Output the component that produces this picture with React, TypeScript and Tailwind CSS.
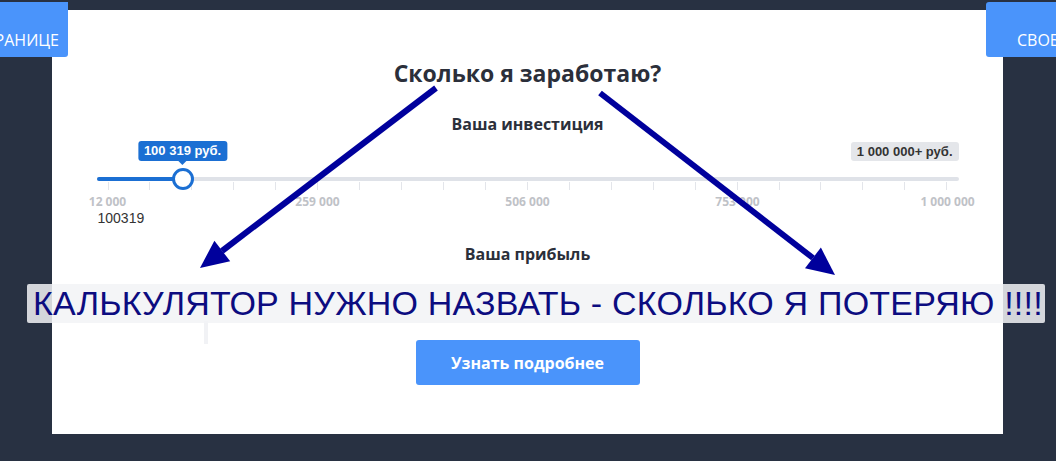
import React from 'react';

const ticks = Array.from({ length: 21 }, (_, i) => i);
const majorLabels = ['12 000', '259 000', '506 000', '753 000', '1 000 000'];

function Slider() {
  const thumbX = 86;
  return (
    <div className="w-[862px] mt-[6px] flex flex-col">
      {/* bubbles */}
      <div className="relative h-[36px] flex justify-end items-start pt-[1px]">
        <div
          className="absolute top-0 -translate-x-1/2 flex flex-col items-center"
          style={{ left: thumbX }}
        >
          <div className="bg-[#1b6fd3] text-white text-[13px] font-bold leading-[20px] px-[6px] rounded-[3px] whitespace-nowrap [font-family:'Liberation_Sans',Arial,sans-serif]">
            100 319 руб.
          </div>
          <div className="w-0 h-0 border-x-[4px] border-x-transparent border-t-[4px] border-t-[#1b6fd3]" />
        </div>
        <div className="bg-[#e4e6ea] text-[#333] text-[13px] font-bold leading-[19px] px-[6px] rounded-[3px] whitespace-nowrap [font-family:'Liberation_Sans',Arial,sans-serif]">
          1 000 000+ руб.
        </div>
      </div>

      {/* track */}
      <div className="relative h-[4px] bg-[#dfe2e8] rounded-full">
        <div className="h-full bg-[#1b6fd3] rounded-full" style={{ width: thumbX }} />
        <div
          className="absolute top-[-9px] w-[22px] h-[22px] -translate-x-1/2 rounded-full bg-white border-[3px] border-[#1b6fd3]"
          style={{ left: thumbX }}
        />
      </div>

      {/* ticks */}
      <div className="flex justify-between px-[11px] mt-[1px] h-[8px]">
        {ticks.map((i) => (
          <div key={i} className="w-px h-full bg-[#e3e5ea]" />
        ))}
      </div>
      <div className="flex justify-between px-[11px] mt-[4px]">
        {majorLabels.map((label) => (
          <div key={label} className="w-0 flex justify-center">
            <span className="text-[12px] font-bold leading-[16px] text-[#bfc2c7] whitespace-nowrap [font-family:'Open_Sans',sans-serif]">
              {label}
            </span>
          </div>
        ))}
      </div>

      <div className="pl-[1px] text-[14px] leading-[16px] text-[#333] [font-family:'Liberation_Sans',Arial,sans-serif]">
        100319
      </div>
    </div>
  );
}

export default function App() {
  return (
    <div className="relative w-[1056px] h-[461px] bg-[#283142] overflow-hidden [font-family:'Open_Sans',sans-serif]">
      <div className="pt-[10px] pl-[52px]">
        <div className="w-[951px] h-[424px] bg-white flex flex-col items-center">
          <h2 className="mt-[47px] text-[23px] leading-[32px] font-bold text-[#2b2f3a]">Сколько я заработаю?</h2>
          <div className="mt-[24px] text-[16px] leading-[22px] font-bold text-[#2b2f3a]">Ваша инвестиция</div>
          <Slider />
          <div className="mt-[17px] text-[16px] leading-[22px] font-bold text-[#2b2f3a]">Ваша прибыль</div>
          <div className="w-[862px] h-[75px] flex items-end pl-[107px]">
            <div className="w-[4px] h-[23px] mb-[-4px] bg-[#f1f2f5]" />
          </div>
          <button className="w-[224px] h-[45px] bg-[#4a94fb] rounded-[3px] text-white text-[16px] font-bold">
            Узнать подробнее
          </button>
        </div>
      </div>

      {/* page-fixed side buttons */}
      <div className="absolute left-0 top-[2px] w-[68px] h-[55px] bg-[#4a94fb] rounded-br-[3px] overflow-hidden flex items-end justify-end pb-[6px] pr-[9px]">
        <span className="text-white text-[16px] leading-[22px] whitespace-nowrap">НА СТРАНИЦЕ</span>
      </div>
      <div className="absolute left-[986px] top-[2px] w-[70px] h-[55px] bg-[#4a94fb] rounded-tl-[3px] rounded-bl-[3px] overflow-hidden flex items-end pb-[6px] pl-[31px]">
        <span className="text-white text-[16px] leading-[22px] whitespace-nowrap">СВОБОДНЫЕ</span>
      </div>

      {/* annotation arrows */}
      <svg className="absolute inset-0 pointer-events-none" width="1056" height="461" viewBox="0 0 1056 461">
        <line x1="436" y1="88" x2="222" y2="251" stroke="#00009c" strokeWidth="6" />
        <polygon points="200,268 214.4,240.7 230.2,261.3" fill="#00009c" />
        <line x1="600" y1="93" x2="813" y2="258" stroke="#00009c" strokeWidth="6" />
        <polygon points="835,275 805,268.2 820.9,247.6" fill="#00009c" />
      </svg>

      {/* annotation caption */}
      <div className="absolute left-[27px] top-[284px] w-[1018px] h-[39px] bg-[#f2f3f6]/85 rounded-[2px] flex items-center pl-[6px]">
        <span className="text-[#0c0c80] text-[34px] tracking-[0.2px] leading-[39px] whitespace-nowrap [font-family:'Liberation_Sans',Arial,sans-serif]">
          КАЛЬКУЛЯТОР НУЖНО НАЗВАТЬ - СКОЛЬКО Я ПОТЕРЯЮ !!!!
        </span>
      </div>
    </div>
  );
}
